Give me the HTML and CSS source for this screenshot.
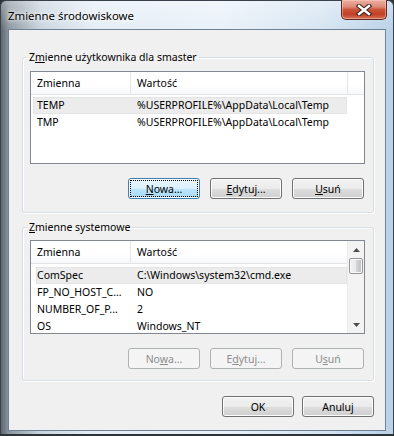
FILE: index.html
```html
<!DOCTYPE html>
<html lang="pl">
<head>
<meta charset="utf-8">
<title>Zmienne środowiskowe</title>
<link rel="stylesheet" href="styles.css">
</head>
<body>
<div class="window">
  <div class="titlebar">
    <span class="title">Zmienne środowiskowe</span>
    <div class="close">
      <svg width="16" height="12" viewBox="0 0 16 12"><path d="M3 2 L13 10 M13 2 L3 10" stroke="#3a2320" stroke-width="4.6" stroke-linecap="square"/><path d="M3 2 L13 10 M13 2 L3 10" stroke="#ffffff" stroke-width="2.4" stroke-linecap="square"/></svg>
    </div>
  </div>
  <div class="client">
    <fieldset class="group g1">
      <legend>Z<u>m</u>ienne użytkownika dla smaster</legend>
      <div class="list l1">
        <div class="hdr">
          <div class="hc c1">Zmienna</div>
          <div class="hc c2 wide">Wartość</div>
          <div class="hc c3"></div>
        </div>
        <div class="rows">
          <div class="row sel"><span class="c1">TEMP</span><span class="c2">%USERPROFILE%\AppData\Local\Temp</span></div>
          <div class="row"><span class="c1">TMP</span><span class="c2">%USERPROFILE%\AppData\Local\Temp</span></div>
        </div>
      </div>
      <div class="btns">
        <button class="btn default"><u>N</u>owa...</button>
        <button class="btn"><u>E</u>dytuj...</button>
        <button class="btn"><u>U</u>suń</button>
      </div>
    </fieldset>
    <fieldset class="group g2">
      <legend><u>Z</u>mienne systemowe</legend>
      <div class="list l2">
        <div class="listmain">
          <div class="hdr">
            <div class="hc c1">Zmienna</div>
            <div class="hc c2">Wartość</div>
          </div>
          <div class="rows">
            <div class="row sel"><span class="c1">ComSpec</span><span class="c2">C:\Windows\system32\cmd.exe</span></div>
            <div class="row"><span class="c1">FP_NO_HOST_C...</span><span class="c2">NO</span></div>
            <div class="row"><span class="c1">NUMBER_OF_P...</span><span class="c2">2</span></div>
            <div class="row"><span class="c1">OS</span><span class="c2">Windows_NT</span></div>
          </div>
        </div>
        <div class="scrollbar">
          <div class="arrow up"><svg width="7" height="4" viewBox="0 0 7 4"><path d="M0 4 L3.5 0 L7 4 Z" fill="#4d4d4d"/></svg></div>
          <div class="thumb"></div>
          <div class="track"></div>
          <div class="arrow down"><svg width="7" height="4" viewBox="0 0 7 4"><path d="M0 0 L3.5 4 L7 0 Z" fill="#4d4d4d"/></svg></div>
        </div>
      </div>
      <div class="btns">
        <button class="btn" disabled>No<u>w</u>a...</button>
        <button class="btn" disabled>E<u>d</u>ytuj...</button>
        <button class="btn" disabled>U<u>s</u>uń</button>
      </div>
    </fieldset>
    <div class="footer">
      <button class="btn">OK</button>
      <button class="btn">Anuluj</button>
    </div>
  </div>
</div>
</body>
</html>
```

FILE: styles.css
```css
* { box-sizing: border-box; }
html, body { margin: 0; padding: 0; }
body {
  width: 394px;
  height: 436px;
  overflow: hidden;
  font-family: "Noto Sans", "Liberation Sans", sans-serif;
  font-size: 10.5px;
  color: #000;
  background: #2e3338;
}
.window {
  width: 394px;
  height: 434px;
  display: flex;
  flex-direction: column;
  padding: 0 7px 3px 7px;
  border-radius: 6px 6px 0 0;
  background:
    linear-gradient(180deg, rgba(255,255,255,0.35) 0px, rgba(255,255,255,0) 30px),
    linear-gradient(90deg, #5f6870 0px, #8c979f 8px, #c9d5df 40px, #e4edf5 90px, #e9f1f8 220px, #d6e5f2 320px, #b8d0e8 394px);
  border: 1px solid #39424a;
  border-bottom: none;
}
.titlebar {
  height: 28px;
  display: flex;
  align-items: flex-start;
  flex: none;
}
.title {
  margin-top: 7px;
  font-size: 11.4px;
  color: #000;
  text-shadow: 0 0 6px #fff, 0 0 3px #fff;
}
.close {
  margin-left: auto;
  margin-top: -1px;
  margin-right: -1px;
  width: 46px;
  height: 20px;
  border: 1px solid #5e2a23;
  border-top: none;
  border-radius: 0 0 5px 5px;
  background: linear-gradient(180deg, #eab0a2 0%, #e08e7a 35%, #cb5538 50%, #c13f26 75%, #d9725a 100%);
  box-shadow: inset 0 0 0 1px rgba(255,210,200,0.45);
  display: flex;
  align-items: center;
  justify-content: center;
}
.client {
  flex: 1;
  display: flex;
  flex-direction: column;
  background: #f0f0f0;
  border: 1px solid #6e8197;
  padding: 0 11px 0 13px;
}
.group {
  margin: 0;
  border: 1px solid #d5dfe5;
  border-radius: 3px;
  padding: 0 8px 0 7px;
  min-width: 0;
  box-shadow: inset 1px 1px 0 #fff, 1px 1px 0 #fff;
}
.group legend {
  padding: 0 2px;
  margin-left: -3px;
  line-height: 16px;
}
.g1 { margin-top: 19px; height: 164px; padding-top: 6px; }
.g2 { margin-top: 6px; height: 162px; padding-top: 5px; }
.list {
  background: #fff;
  border: 1px solid #828790;
}
.l1 { height: 93px; }
.l2 { height: 94px; display: flex; overflow: hidden; }
.listmain { flex: 1; min-width: 0; }
.hdr {
  display: flex;
  height: 23px;
  background: linear-gradient(180deg, #ffffff 0%, #ffffff 60%, #f7f8fa 100%);
  border-bottom: 1px solid #e5e5e5;
}
.hc {
  line-height: 22px;
  padding-left: 6px;
  border-right: 1px solid #e5e5e5;
}
.hdr .c1 { width: 100px; }
.hdr .c2 { flex: 1; border-right: none; }
.hdr .c2.wide { flex: none; width: 217px; border-right: 1px solid #e5e5e5; }
.hdr .c3 { flex: 1; border-right: none; }
.rows { padding-top: 2px; }
.l2 .rows { padding-top: 3px; }
.row {
  display: flex;
  height: 17px;
  line-height: 17px;
  margin: 0 17px 0 2px;
  white-space: nowrap;
}
.l2 .row { margin: 0 0 0 5px; }
.row.sel {
  background: #ececec;
  box-shadow: inset 0 0 0 1px #e4e4e4;
}
.row .c1 { width: 98px; padding-left: 4px; flex: none; }
.l2 .row .c1 { width: 95px; padding-left: 1px; }
.row .c2 { padding-left: 6px; }
.scrollbar {
  width: 17px;
  flex: none;
  display: flex;
  flex-direction: column;
  background: #f3f3f3;
  border-left: 1px solid #ececec;
}
.arrow {
  height: 17px;
  display: flex;
  align-items: center;
  justify-content: center;
  flex: none;
}
.thumb {
  height: 16px;
  margin: 0 1px;
  border: 1px solid #959595;
  border-radius: 2px;
  background: linear-gradient(90deg, #f3f3f3 0%, #e8e8e9 50%, #d6d6d8 51%, #bcbdc0 100%);
  box-shadow: inset 0 0 0 1px #fafafa;
  flex: none;
}
.track { flex: 1; }
.btns {
  display: flex;
  justify-content: flex-end;
  gap: 10px;
  margin-top: 14px;
  padding-right: 1px;
}
.btn {
  width: 72px;
  height: 21px;
  padding: 0;
  font-family: inherit;
  font-size: 10.5px;
  color: #000;
  border: 1px solid #707070;
  border-radius: 3px;
  background: linear-gradient(180deg, #f2f2f2 0%, #ebebeb 50%, #dddddd 51%, #cfcfcf 100%);
  box-shadow: inset 0 0 0 1px #fcfcfc;
  line-height: 18px;
}
.btn.default {
  border-color: #3c7fb1;
  background: linear-gradient(180deg, #eaf6fd 0%, #d9f0fc 50%, #bee6fd 51%, #a7d9f5 100%);
  outline: 1px dotted #000;
  outline-offset: -3px;
}
.btn:disabled {
  color: #8d8d8d;
  border-color: #adb2b5;
  background: #f4f4f4;
  box-shadow: none;
}
.footer {
  display: flex;
  justify-content: flex-end;
  gap: 8px;
  margin-top: 15px;
}
```
